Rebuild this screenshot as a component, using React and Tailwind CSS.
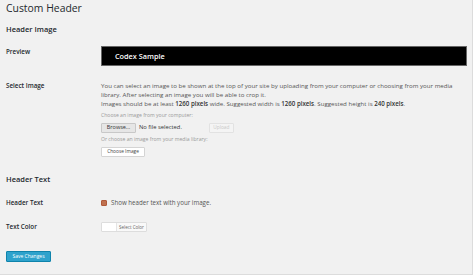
export default function App() {
  const font = { fontFamily: '"Open Sans", "Liberation Sans", sans-serif' };
  return (
    <div className="w-[474px] h-[278px] bg-white overflow-hidden" style={font}>
      <div className="w-[473px] h-[275px] bg-[#f1f1f1] border-r border-b border-[#dcdcdc] pl-[6px] text-[#444]">
        <h1 className="text-[10.4px] leading-[16px] text-[#23282d] font-normal">Custom Header</h1>
        <h2 className="mt-[8px] text-[7.5px] leading-[10px] font-semibold text-[#23282d]">Header Image</h2>

        <div className="mt-[12px] flex">
          <div className="w-[95px] pt-[1px] text-[6.3px] leading-[10px] font-semibold text-[#23282d]">Preview</div>
          <div className="w-[366px] h-[20px] bg-black border border-[#666] flex items-center pl-[13px]">
            <span className="text-white text-[7.3px] font-semibold">Codex Sample</span>
          </div>
        </div>

        <div className="mt-[15px] flex">
          <div className="w-[95px] text-[6.3px] leading-[9px] font-semibold text-[#23282d]">Select Image</div>
          <div className="flex-1 pr-[6px]">
            <p className="text-[6.15px] leading-[9.2px] text-[#555]">
              You can select an image to be shown at the top of your site by uploading from your computer or choosing from your media
              <br />
              library. After selecting an image you will be able to crop it.
              <br />
              Images should be at least <b className="font-semibold text-[#333]">1260 pixels</b> wide. Suggested width is <b className="font-semibold text-[#333]">1260 pixels</b>. Suggested height is <b className="font-semibold text-[#333]">240 pixels</b>.
            </p>
            <p className="mt-[3.5px] text-[5.1px] leading-[7px] text-[#999]">Choose an image from your computer:</p>
            <div className="mt-[3.5px] flex items-center h-[10px]">
              <span className="h-[10px] w-[35px] flex items-center justify-center bg-[#e6e6e6] border border-[#c8c8c8] rounded-[1px] text-[5.5px] text-[#333]">Browse...</span>
              <span className="ml-[3px] text-[5.8px] text-[#333]">No file selected.</span>
              <span className="ml-[27px] h-[10px] w-[25px] flex items-center justify-center bg-[#f4f4f4] border border-[#e2e2e2] rounded-[1px] text-[4.8px] text-[#c8c8c8]">Upload</span>
            </div>
            <p className="mt-[3.5px] text-[5.1px] leading-[7px] text-[#999]">Or choose an image from your media library:</p>
            <div className="mt-[3.5px] h-[10.5px] w-[44px] flex items-center justify-center bg-white border border-[#d4d4d4] rounded-[1px] text-[4.8px] text-[#444]">Choose Image</div>
          </div>
        </div>

        <h2 className="mt-[17px] text-[7.5px] leading-[10px] font-semibold text-[#23282d]">Header Text</h2>

        <div className="mt-[14px] flex items-center h-[10px]">
          <div className="w-[95px] text-[6.3px] font-semibold text-[#23282d]">Header Text</div>
          <span className="w-[6px] h-[6px] bg-[#c0714f] border border-[#b05a3a] rounded-[1px]"></span>
          <span className="ml-[4px] text-[6.2px] text-[#555]">Show header text with your image.</span>
        </div>

        <div className="mt-[14px] flex items-center h-[10px]">
          <div className="w-[95px] text-[6.3px] font-semibold text-[#23282d]">Text Color</div>
          <div className="h-[10px] w-[46px] flex border border-[#ddd] rounded-[1px] bg-white overflow-hidden">
            <span className="w-[14px] h-full bg-white"></span>
            <span className="flex-1 bg-[#f9f9f9] border-l border-[#e4e4e4] flex items-center justify-center text-[4.5px] text-[#666]">Select Color</span>
          </div>
        </div>

        <button className="mt-[19px] h-[11px] w-[45px] bg-[#2ea2cc] border border-[#0f83ab] rounded-[1px] text-[5px] text-white flex items-center justify-center">Save Changes</button>
      </div>
    </div>
  );
}
